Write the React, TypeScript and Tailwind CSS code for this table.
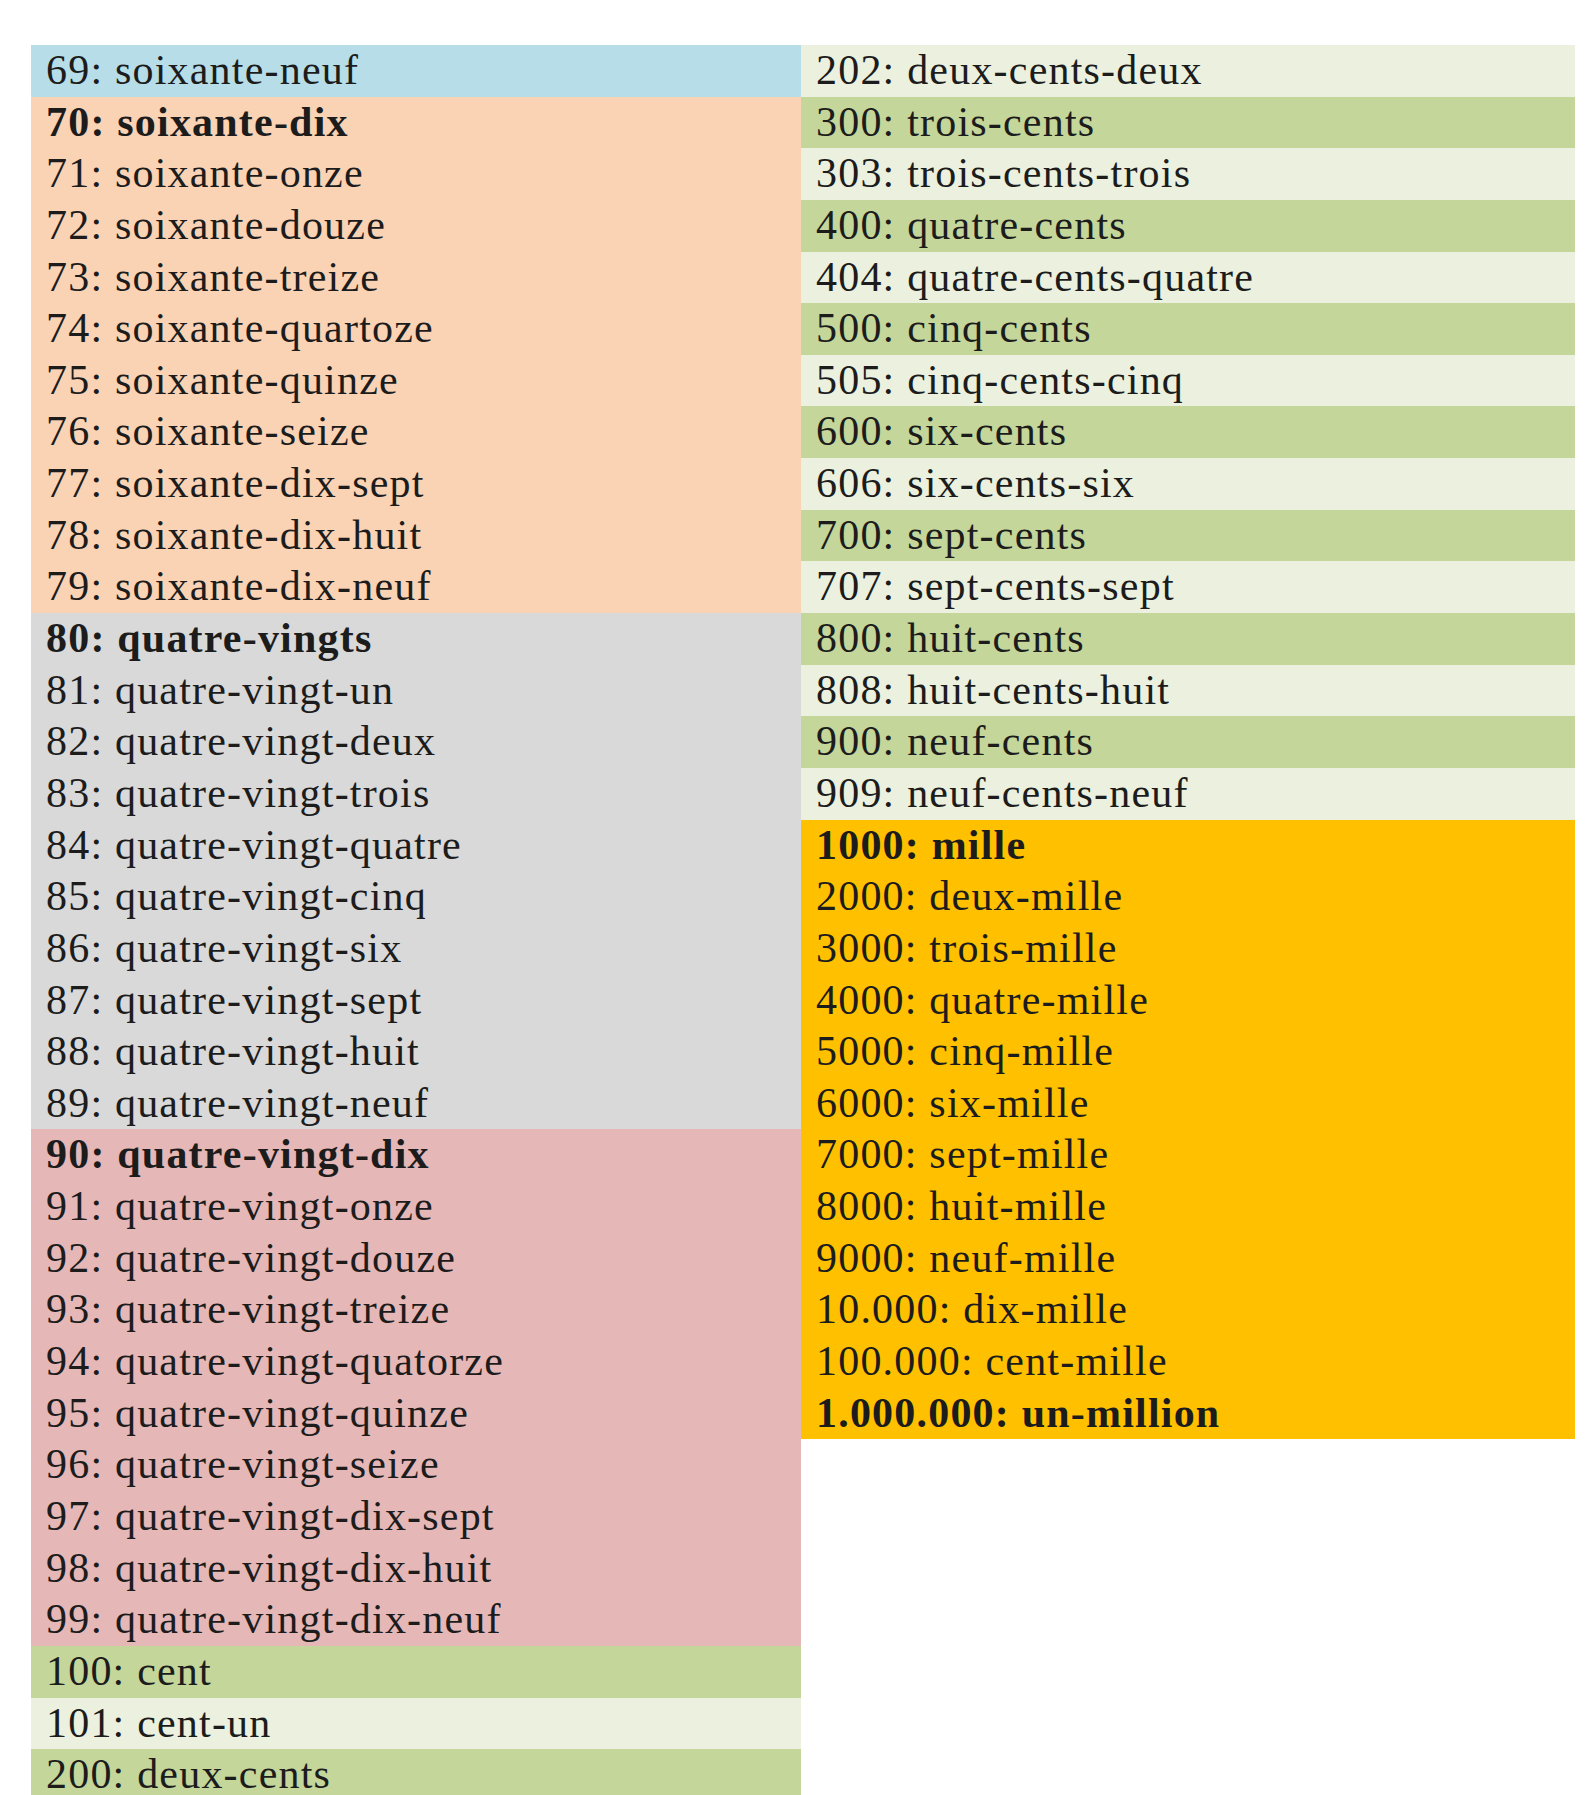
import React from "react";

type Row = { label: string; bg: string; bold?: boolean };

const left: Row[] = [
  { label: "69: soixante-neuf", bg: "bg-[#b7dee8]" },
  { label: "70: soixante-dix", bg: "bg-[#fad2b4]", bold: true },
  { label: "71: soixante-onze", bg: "bg-[#fad2b4]" },
  { label: "72: soixante-douze", bg: "bg-[#fad2b4]" },
  { label: "73: soixante-treize", bg: "bg-[#fad2b4]" },
  { label: "74: soixante-quartoze", bg: "bg-[#fad2b4]" },
  { label: "75: soixante-quinze", bg: "bg-[#fad2b4]" },
  { label: "76: soixante-seize", bg: "bg-[#fad2b4]" },
  { label: "77: soixante-dix-sept", bg: "bg-[#fad2b4]" },
  { label: "78: soixante-dix-huit", bg: "bg-[#fad2b4]" },
  { label: "79: soixante-dix-neuf", bg: "bg-[#fad2b4]" },
  { label: "80: quatre-vingts", bg: "bg-[#d9d9d9]", bold: true },
  { label: "81: quatre-vingt-un", bg: "bg-[#d9d9d9]" },
  { label: "82: quatre-vingt-deux", bg: "bg-[#d9d9d9]" },
  { label: "83: quatre-vingt-trois", bg: "bg-[#d9d9d9]" },
  { label: "84: quatre-vingt-quatre", bg: "bg-[#d9d9d9]" },
  { label: "85: quatre-vingt-cinq", bg: "bg-[#d9d9d9]" },
  { label: "86: quatre-vingt-six", bg: "bg-[#d9d9d9]" },
  { label: "87: quatre-vingt-sept", bg: "bg-[#d9d9d9]" },
  { label: "88: quatre-vingt-huit", bg: "bg-[#d9d9d9]" },
  { label: "89: quatre-vingt-neuf", bg: "bg-[#d9d9d9]" },
  { label: "90: quatre-vingt-dix", bg: "bg-[#e5b7b7]", bold: true },
  { label: "91: quatre-vingt-onze", bg: "bg-[#e5b7b7]" },
  { label: "92: quatre-vingt-douze", bg: "bg-[#e5b7b7]" },
  { label: "93: quatre-vingt-treize", bg: "bg-[#e5b7b7]" },
  { label: "94: quatre-vingt-quatorze", bg: "bg-[#e5b7b7]" },
  { label: "95: quatre-vingt-quinze", bg: "bg-[#e5b7b7]" },
  { label: "96: quatre-vingt-seize", bg: "bg-[#e5b7b7]" },
  { label: "97: quatre-vingt-dix-sept", bg: "bg-[#e5b7b7]" },
  { label: "98: quatre-vingt-dix-huit", bg: "bg-[#e5b7b7]" },
  { label: "99: quatre-vingt-dix-neuf", bg: "bg-[#e5b7b7]" },
  { label: "100: cent", bg: "bg-[#c4d69a]" },
  { label: "101: cent-un", bg: "bg-[#ebf1de]" },
  { label: "200: deux-cents", bg: "bg-[#c4d69a]" },
];

const hundreds = [
  "202: deux-cents-deux",
  "300: trois-cents",
  "303: trois-cents-trois",
  "400: quatre-cents",
  "404: quatre-cents-quatre",
  "500: cinq-cents",
  "505: cinq-cents-cinq",
  "600: six-cents",
  "606: six-cents-six",
  "700: sept-cents",
  "707: sept-cents-sept",
  "800: huit-cents",
  "808: huit-cents-huit",
  "900: neuf-cents",
  "909: neuf-cents-neuf",
];

const thousands = [
  "1000: mille",
  "2000: deux-mille",
  "3000: trois-mille",
  "4000: quatre-mille",
  "5000: cinq-mille",
  "6000: six-mille",
  "7000: sept-mille",
  "8000: huit-mille",
  "9000: neuf-mille",
  "10.000: dix-mille",
  "100.000: cent-mille",
  "1.000.000: un-million",
];

const right: Row[] = [
  ...hundreds.map((label, i) => ({
    label,
    bg: i % 2 === 0 ? "bg-[#ebf1de]" : "bg-[#c4d69a]",
  })),
  ...thousands.map((label, i) => ({
    label,
    bg: "bg-[#ffc000]",
    bold: i === 0 || i === thousands.length - 1,
  })),
];

function Cell({ row }: { row: Row }) {
  return (
    <div
      className={`${row.bg} h-[51.65px] leading-[51.65px] pl-[15px] pr-4 text-[42px] tracking-[1.2px] whitespace-nowrap text-[#1c1c1c] ${
        row.bold ? "font-bold" : "font-normal"
      }`}
    >
      {row.label}
    </div>
  );
}

export default function App() {
  return (
    <div className="h-[1795px] w-[1588px] overflow-hidden bg-white pt-[45px] pl-[31px] font-['Liberation_Serif',serif]">
      <div className="flex items-start">
        <div className="flex w-[770px] flex-col">
          {left.map((r) => (
            <Cell key={r.label} row={r} />
          ))}
        </div>
        <div className="flex w-[774px] flex-col">
          {right.map((r) => (
            <Cell key={r.label} row={r} />
          ))}
        </div>
      </div>
    </div>
  );
}
